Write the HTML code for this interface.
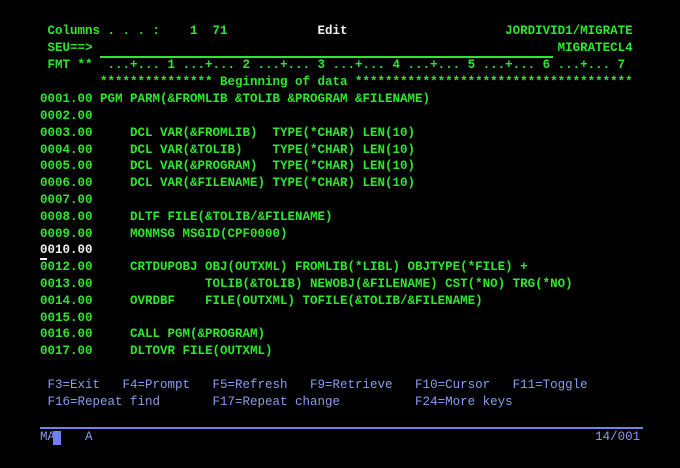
<!DOCTYPE html>
<html><head><style>
html,body{margin:0;padding:0;background:#000;width:680px;height:468px;overflow:hidden}
.r{position:absolute;left:40px;white-space:pre;font:bold 12.5px/17px "Liberation Mono",monospace;color:#2ee62e;height:17px}
.w{color:#f0f0f0}
.b{color:#8a9cf0;font-weight:normal}
</style></head><body>
<div class="r" style="top:23px"> Columns . . . :    1  71            <span class="w">Edit</span>                     JORDIVID1/MIGRATE</div>
<div class="r" style="top:40px"> SEU==&gt;                                                              MIGRATECL4</div>
<div style="position:absolute;left:100px;top:56px;width:453px;height:2px;background:#2ee62e"></div>
<div class="r" style="top:57px"> FMT **  ...+... 1 ...+... 2 ...+... 3 ...+... 4 ...+... 5 ...+... 6 ...+... 7</div>
<div class="r" style="top:74px">        *************** Beginning of data *************************************</div>
<div class="r" style="top:91px">0001.00 PGM PARM(&amp;FROMLIB &amp;TOLIB &amp;PROGRAM &amp;FILENAME)</div>
<div class="r" style="top:108px">0002.00</div>
<div class="r" style="top:125px">0003.00     DCL VAR(&amp;FROMLIB)  TYPE(*CHAR) LEN(10)</div>
<div class="r" style="top:142px">0004.00     DCL VAR(&amp;TOLIB)    TYPE(*CHAR) LEN(10)</div>
<div class="r" style="top:158px">0005.00     DCL VAR(&amp;PROGRAM)  TYPE(*CHAR) LEN(10)</div>
<div class="r" style="top:175px">0006.00     DCL VAR(&amp;FILENAME) TYPE(*CHAR) LEN(10)</div>
<div class="r" style="top:192px">0007.00</div>
<div class="r" style="top:209px">0008.00     DLTF FILE(&amp;TOLIB/&amp;FILENAME)</div>
<div class="r" style="top:226px">0009.00     MONMSG MSGID(CPF0000)</div>
<div class="r w" style="top:242px">0010.00</div>
<div style="position:absolute;left:40px;top:258px;width:7px;height:2px;background:#f0f0f0"></div>
<div class="r" style="top:259px">0012.00     CRTDUPOBJ OBJ(OUTXML) FROMLIB(*LIBL) OBJTYPE(*FILE) +</div>
<div class="r" style="top:276px">0013.00               TOLIB(&amp;TOLIB) NEWOBJ(&amp;FILENAME) CST(*NO) TRG(*NO)</div>
<div class="r" style="top:293px">0014.00     OVRDBF    FILE(OUTXML) TOFILE(&amp;TOLIB/&amp;FILENAME)</div>
<div class="r" style="top:310px">0015.00</div>
<div class="r" style="top:326px">0016.00     CALL PGM(&amp;PROGRAM)</div>
<div class="r" style="top:343px">0017.00     DLTOVR FILE(OUTXML)</div>
<div class="r b" style="top:377px"> F3=Exit   F4=Prompt   F5=Refresh   F9=Retrieve   F10=Cursor   F11=Toggle</div>
<div class="r b" style="top:394px"> F16=Repeat find       F17=Repeat change          F24=More keys</div>
<div style="position:absolute;left:40px;top:427px;width:603px;height:2px;background:#6f82e8"></div>
<div class="r b" style="top:429px">MA    A                                                                   14/001</div>
<div style="position:absolute;left:53px;top:431px;width:8px;height:14px;background:#6f82e8"></div>
</body></html>
